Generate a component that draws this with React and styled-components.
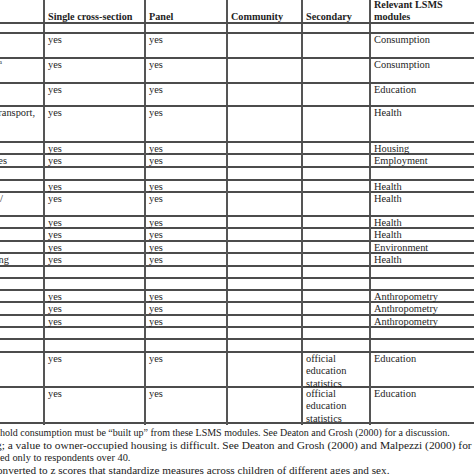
import React from "react";
import styled, { createGlobalStyle } from "styled-components";

const Global = createGlobalStyle`
  html, body {
    margin: 0;
    padding: 0;
    background: #ffffff;
  }
  body {
    width: 474px;
    height: 474px;
    overflow: hidden;
    font-family: "Liberation Serif", "Times New Roman", serif;
    color: #1e1e1e;
  }
`;

const Page = styled.div`
  width: 474px;
  height: 474px;
  overflow: hidden;
`;

const Table = styled.div`
  display: flex;
  flex-direction: column;
  width: max-content;
  margin-left: -255px;
  margin-top: -6px;
`;

const Row = styled.div`
  display: grid;
  grid-template-columns: 300px 101px 82px 75px 68px 220px;
  height: ${(p) => p.$h}px;
  box-sizing: border-box;
  border-bottom: 2px solid #4c4c4c;
`;

const Cell = styled.div`
  box-sizing: border-box;
  border-right: 2px solid #555;
  padding: 0 3px;
  font-size: 10.4px;
  line-height: 12.4px;
  white-space: pre-line;
`;

const HeadCell = styled(Cell)`
  display: flex;
  align-items: flex-end;
  padding-bottom: 0;
  font-weight: bold;
  font-size: 10.2px;
  line-height: 11.5px;
`;

const Label = styled(Cell)`
  text-align: right;
  white-space: nowrap;
  overflow: hidden;
  padding-right: ${(p) => p.$inset}px;
`;

const Sup = styled.sup`
  font-size: 6px;
  line-height: 0;
`;

const Notes = styled.div`
  padding-top: 2px;
`;

const Note = styled.div`
  white-space: nowrap;
  font-size: ${(p) => p.$size}px;
  line-height: ${(p) => p.$lh}px;
  margin-left: ${(p) => p.$shift || 0}px;
  color: #1a1a1a;
`;

const edu = "official\neducation\nstatistics";

const rows = [
  { h: 10, mod: "" },
  { h: 25, y: true, mod: "Consumption" },
  { h: 25, y: true, mod: "Consumption", label: "Housing value", sup: true, inset: 41 },
  { h: 23, y: true, mod: "Education" },
  { h: 36, y: true, mod: "Health", label: "Access to health services, transport,", inset: 8 },
  { h: 12, y: true, mod: "Housing" },
  { h: 13, y: true, mod: "Employment", label: "Labor force activities", inset: 36 },
  { h: 13, mod: "" },
  { h: 12, y: true, mod: "Health" },
  { h: 24, y: true, mod: "Health", label: "Health status/", inset: 40 },
  { h: 12, y: true, mod: "Health" },
  { h: 13, y: true, mod: "Health" },
  { h: 12, y: true, mod: "Environment" },
  { h: 13, y: true, mod: "Health", label: "Smoking", inset: 34 },
  { h: 12, mod: "" },
  { h: 12, mod: "" },
  { h: 12, y: true, mod: "Anthropometry" },
  { h: 13, y: true, mod: "Anthropometry" },
  { h: 12, y: true, mod: "Anthropometry" },
  { h: 12, mod: "" },
  { h: 13, mod: "" },
  { h: 35, y: true, sec: edu, mod: "Education" },
  { h: 36, y: true, sec: edu, mod: "Education" },
];

const App = () => {
  return (
    <Page>
      <Global />
      <Table>
        <Row $h={30}>
          <HeadCell />
          <HeadCell>Single cross-section</HeadCell>
          <HeadCell>Panel</HeadCell>
          <HeadCell>Community</HeadCell>
          <HeadCell>Secondary</HeadCell>
          <HeadCell>
            Relevant LSMS
            <br />
            modules
          </HeadCell>
        </Row>
        {rows.map((r, i) => (
          <Row key={i} $h={r.h}>
            <Label $inset={r.inset || 4}>
              {r.label ? r.label : ""}
              {r.sup ? <Sup>a</Sup> : null}
            </Label>
            <Cell>{r.y ? "yes" : ""}</Cell>
            <Cell>{r.y ? "yes" : ""}</Cell>
            <Cell />
            <Cell>{r.sec || ""}</Cell>
            <Cell>{r.mod}</Cell>
          </Row>
        ))}
      </Table>
      <Notes>
        <Note $size={10} $lh={13}>
          hold consumption must be “built up” from these LSMS modules. See Deaton and Grosh (2000) for a discussion.
        </Note>
        <Note $size={11.4} $lh={12.5} $shift={-4}>
          g; a value to owner-occupied housing is difficult. See Deaton and Grosh (2000) and Malpezzi (2000) for a
        </Note>
        <Note $size={10.4} $lh={12}>
          ed only to respondents over 40.
        </Note>
        <Note $size={11.2} $lh={12} $shift={-3}>
          onverted to z scores that standardize measures across children of different ages and sex.
        </Note>
      </Notes>
    </Page>
  );
};

export default App;
